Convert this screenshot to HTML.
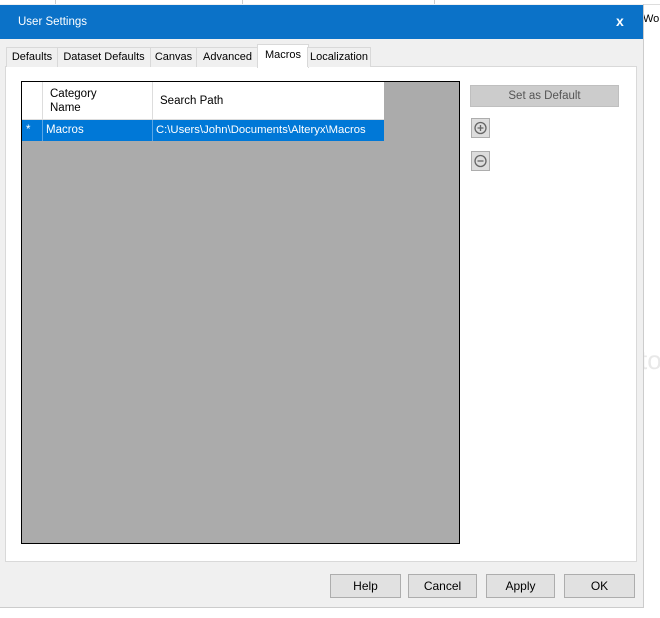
<!DOCTYPE html>
<html><head><style>
body{margin:0;width:660px;height:618px;background:#fff;position:relative;overflow:hidden;font-family:"Liberation Sans",sans-serif;font-size:11.5px;color:#000}
.a{position:absolute}
.tab{position:absolute;top:47px;height:19px;background:#f0f0f0;border:1px solid #d9d9d9;border-bottom:none;line-height:19px;text-align:center;font-size:11px;white-space:nowrap}
.btn{position:absolute;top:574px;height:22px;background:#e1e1e1;border:1px solid #adadad;text-align:center;line-height:22px;font-size:12px}
.ic{position:absolute;left:471px;width:17px;height:18px;background:#ddd;border:1px solid #adadad}
</style></head><body>
<div class="a" style="left:0;top:0;width:660px;height:4px;border-bottom:1px solid #ddd"></div>
<div class="a" style="left:55px;top:0;width:1px;height:4px;background:#ccc"></div>
<div class="a" style="left:242px;top:0;width:1px;height:4px;background:#ccc"></div>
<div class="a" style="left:434px;top:0;width:1px;height:4px;background:#ccc"></div>
<div class="a" style="left:643px;top:13px;font-size:11px">Wor</div>
<div class="a" style="left:640px;top:345px;font-size:26px;color:#e8e8e8">to</div>
<div class="a" style="left:0;top:4px;width:643px;height:603px;background:#f0f0f0;border-right:1px solid #ccc;border-bottom:1px solid #ccc"></div>
<div class="a" style="left:0;top:5px;width:643px;height:34px;background:#0b72c8"></div>
<div class="a" style="left:18px;top:16px;color:#fff;font-size:11.5px">User Settings</div>
<div class="a" style="left:616px;top:13px;color:#fff;font-size:14px;font-weight:bold">x</div>
<div class="a" style="left:5px;top:66px;width:630px;height:494px;background:#fff;border:1px solid #d9d9d9"></div>
<div class="tab" style="left:6px;width:50px">Defaults</div>
<div class="tab" style="left:57px;width:92px">Dataset Defaults</div>
<div class="tab" style="left:150px;width:45px">Canvas</div>
<div class="tab" style="left:196px;width:61px">Advanced</div>
<div class="tab" style="left:257px;top:44px;height:23px;width:50px;background:#fff;line-height:21px">Macros</div>
<div class="tab" style="left:307px;width:62px">Localization</div>
<div class="a" style="left:21px;top:81px;width:437px;height:461px;background:#ababab;border:1px solid #000"></div>
<div class="a" style="left:22px;top:82px;width:362px;height:37px;background:#fff;border-bottom:1px solid #ddd"></div>
<div class="a" style="left:42px;top:82px;width:1px;height:59px;background:#ddd"></div>
<div class="a" style="left:152px;top:82px;width:1px;height:59px;background:#ddd"></div>
<div class="a" style="left:50px;top:87px;line-height:14px">Category<br>Name</div>
<div class="a" style="left:160px;top:95px">Search Path</div>
<div class="a" style="left:22px;top:120px;width:362px;height:21px;background:#0078d7"></div>
<div class="a" style="left:42px;top:120px;width:1px;height:21px;background:#5aa6e6"></div>
<div class="a" style="left:152px;top:120px;width:1px;height:21px;background:#5aa6e6"></div>
<div class="a" style="left:26px;top:124px;color:#fff">*</div>
<div class="a" style="left:46px;top:124px;color:#fff">Macros</div>
<div class="a" style="left:156px;top:124px;color:#fff;font-size:11.3px">C:\Users\John\Documents\Alteryx\Macros</div>
<div class="a" style="left:470px;top:85px;width:147px;height:20px;background:#ccc;border:1px solid #bfbfbf;text-align:center;line-height:20px;color:#555">Set as Default</div>
<div class="ic" style="top:118px"><svg width="17" height="18"><circle cx="8.5" cy="9" r="5.5" fill="none" stroke="#666" stroke-width="1.3"/><path d="M8.5 6v6M5.5 9h6" stroke="#666" stroke-width="1.3"/></svg></div>
<div class="ic" style="top:151px"><svg width="17" height="18"><circle cx="8.5" cy="9" r="5.5" fill="none" stroke="#666" stroke-width="1.3"/><path d="M5.5 9h6" stroke="#666" stroke-width="1.3"/></svg></div>
<div class="btn" style="left:330px;width:69px">Help</div>
<div class="btn" style="left:408px;width:67px">Cancel</div>
<div class="btn" style="left:486px;width:67px">Apply</div>
<div class="btn" style="left:564px;width:69px">OK</div>
</body></html>
